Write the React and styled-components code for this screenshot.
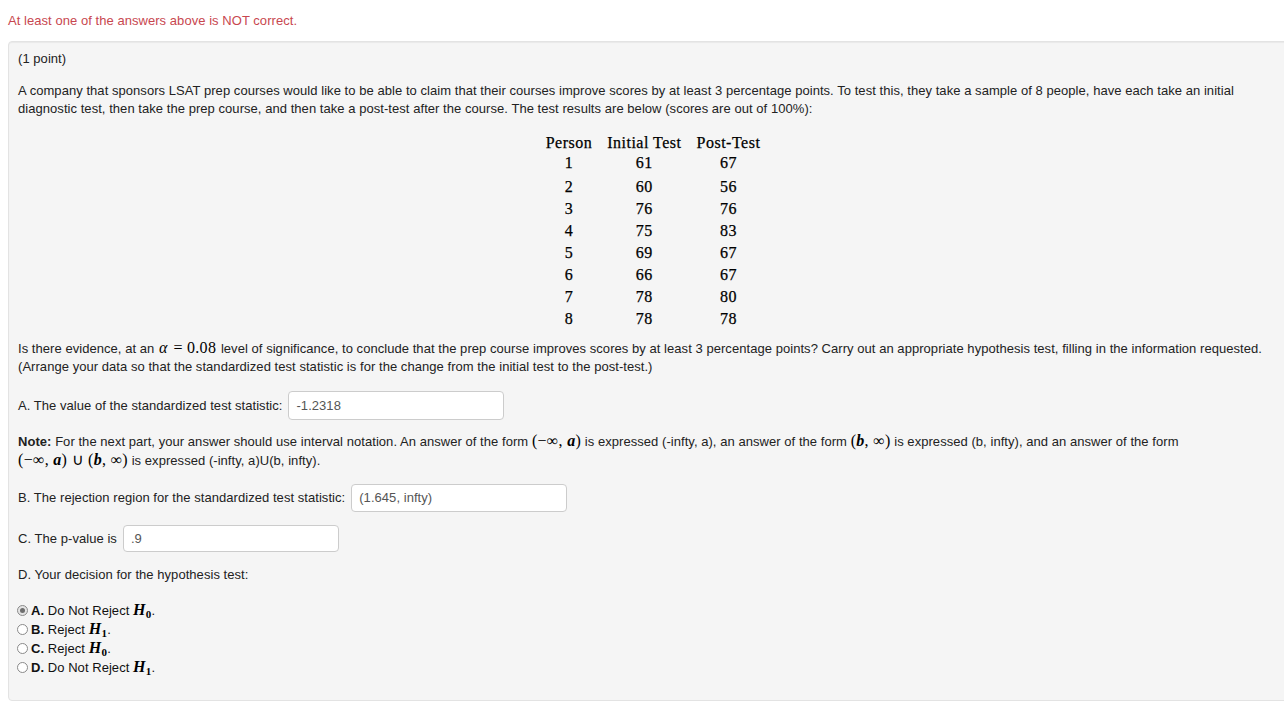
import React from 'react'
import styled, { createGlobalStyle } from 'styled-components'

const GlobalSC = createGlobalStyle`
  html, body {
    margin: 0;
    padding: 0;
    background: #fff;
    overflow: hidden;
  }
  body {
    padding: 8px;
    font-family: "Liberation Sans", Arial, sans-serif;
    font-size: 13px;
    letter-spacing: 0.05px;
    color: #222;
  }
`

const ErrorSC = styled.div`
  color: #c8474f;
  line-height: 18px;
  margin: 4px 0 0;
`

const WellSC = styled.div`
  margin-top: 11px;
  width: 1290px;
  box-sizing: border-box;
  min-height: 660px;
  background: #f5f5f5;
  border: 1px solid #e3e3e3;
  border-radius: 4px;
  box-shadow: inset 0 1px 1px rgba(0, 0, 0, 0.05);
  padding: 8px 9px 22px;
  line-height: 18px;
`

const BlockSC = styled.div`
  margin-top: ${(p) => p.$top || 0}px;
  line-height: ${(p) => p.$lh || 18}px;
`

const MathSC = styled.span`
  font-family: "Liberation Serif", "Times New Roman", serif;
  font-size: 16px;
  line-height: 0;
  color: #000;
  letter-spacing: 0.3px;
  white-space: nowrap;
  padding: 0 ${(p) => (p.$pad ? 1 : 0)}px;
  font-style: ${(p) => (p.$italic ? 'italic' : 'normal')};
  font-weight: ${(p) => (p.$bold ? 'bold' : 'normal')};
`

const SubSC = styled.span`
  font-size: 11px;
  font-style: normal;
  position: relative;
  top: 3px;
`

const TableSC = styled.div`
  margin: 15px auto 0;
  display: grid;
  grid-template-columns: auto auto auto;
  column-gap: 15px;
  width: max-content;
  font-family: "Liberation Serif", "Times New Roman", serif;
  font-size: 16px;
  color: #000;
  -webkit-text-stroke: 0.25px #000;
`

const CellSC = styled.div`
  text-align: center;
  height: ${(p) => p.$h || 22}px;
  line-height: ${(p) => p.$lh || p.$h || 22}px;
  letter-spacing: 0.5px;
`

const FieldRowSC = styled.div`
  margin-top: ${(p) => p.$top}px;
  display: flex;
  align-items: center;
  gap: 6px;
`

const InputSC = styled.div`
  width: 216px;
  height: ${(p) => p.$h || 29}px;
  box-sizing: border-box;
  background: #fff;
  border: 1px solid #ccc;
  border-radius: 4px;
  padding: 0 7px;
  display: flex;
  align-items: center;
  color: #555;
`

const OptionsSC = styled.div`
  margin-top: 17px;
  display: flex;
  flex-direction: column;
`

const OptionSC = styled.label`
  display: flex;
  align-items: center;
  height: 19px;
  gap: 3px;
  color: #111;
`

const RadioSC = styled.span`
  width: 11px;
  height: 11px;
  border-radius: 50%;
  border: 1px solid #8a8a8a;
  background: ${(p) => (p.$checked ? '#e4e4e4' : '#fff')};
  box-sizing: border-box;
  display: flex;
  align-items: center;
  justify-content: center;
  margin-left: -1px;
  &::after {
    content: '';
    width: 5px;
    height: 5px;
    border-radius: 50%;
    background: ${(p) => (p.$checked ? '#6e6e6e' : 'transparent')};
  }
`

const H = ({ sub }) => (
  <MathSC $italic $bold>
    H<SubSC>{sub}</SubSC>
  </MathSC>
)

const rows = [
  [1, 61, 67],
  [2, 60, 56],
  [3, 76, 76],
  [4, 75, 83],
  [5, 69, 67],
  [6, 66, 67],
  [7, 78, 80],
  [8, 78, 78],
]

const options = [
  { key: 'A', text: 'Do Not Reject', sub: '0', checked: true },
  { key: 'B', text: 'Reject', sub: '1' },
  { key: 'C', text: 'Reject', sub: '0' },
  { key: 'D', text: 'Do Not Reject', sub: '1' },
]

export default function App() {
  return (
    <>
      <GlobalSC />
      <ErrorSC>At least one of the answers above is NOT correct.</ErrorSC>
      <WellSC>
        <BlockSC>(1 point)</BlockSC>
        <BlockSC $top={14}>
          A company that sponsors LSAT prep courses would like to be able to claim that their courses improve scores by
          at least 3 percentage points. To test this, they take a sample of 8 people, have each take an initial
          diagnostic test, then take the prep course, and then take a post-test after the course. The test results are
          below (scores are out of 100%):
        </BlockSC>

        <TableSC>
          <CellSC $h={20}>Person</CellSC>
          <CellSC $h={20}>Initial Test</CellSC>
          <CellSC $h={20}>Post-Test</CellSC>
          {rows.map((r, i) =>
            r.map((v, j) => (
              <CellSC key={i + '-' + j} $h={i === 0 ? 23 : 22} $lh={i === 0 ? 19 : 22}>
                {v}
              </CellSC>
            ))
          )}
        </TableSC>

        <BlockSC $top={10}>
          Is there evidence, at an <MathSC $italic $pad>α</MathSC> <MathSC $pad>= 0.08</MathSC> level of significance, to
          conclude that the prep course improves scores by at least 3 percentage points? Carry out an appropriate
          hypothesis test, filling in the information requested. (Arrange your data so that the standardized test
          statistic is for the change from the initial test to the post-test.)
        </BlockSC>

        <FieldRowSC $top={15}>
          A. The value of the standardized test statistic:
          <InputSC>-1.2318</InputSC>
        </FieldRowSC>

        <BlockSC $top={12} $lh={19}>
          <b>Note:</b> For the next part, your answer should use interval notation. An answer of the form{' '}
          <MathSC>
            (−∞, <MathSC $italic $bold>a</MathSC>)
          </MathSC>{' '}
          is expressed (-infty, a), an answer of the form{' '}
          <MathSC>
            (<MathSC $italic $bold>b</MathSC>, ∞)
          </MathSC>{' '}
          is expressed (b, infty), and an answer of the form{' '}
          <MathSC>
            (−∞, <MathSC $italic $bold>a</MathSC>) ∪ (<MathSC $italic $bold>b</MathSC>, ∞)
          </MathSC>{' '}
          is expressed (-infty, a)U(b, infty).
        </BlockSC>

        <FieldRowSC $top={14}>
          B. The rejection region for the standardized test statistic:
          <InputSC $h={28}>(1.645, infty)</InputSC>
        </FieldRowSC>

        <FieldRowSC $top={13}>
          C. The p-value is
          <InputSC $h={27}>.9</InputSC>
        </FieldRowSC>

        <BlockSC $top={14}>D. Your decision for the hypothesis test:</BlockSC>

        <OptionsSC>
          {options.map((o) => (
            <OptionSC key={o.key}>
              <RadioSC $checked={o.checked} />
              <span>
                <b>{o.key}.</b> {o.text} <H sub={o.sub} />.
              </span>
            </OptionSC>
          ))}
        </OptionsSC>
      </WellSC>
    </>
  )
}
